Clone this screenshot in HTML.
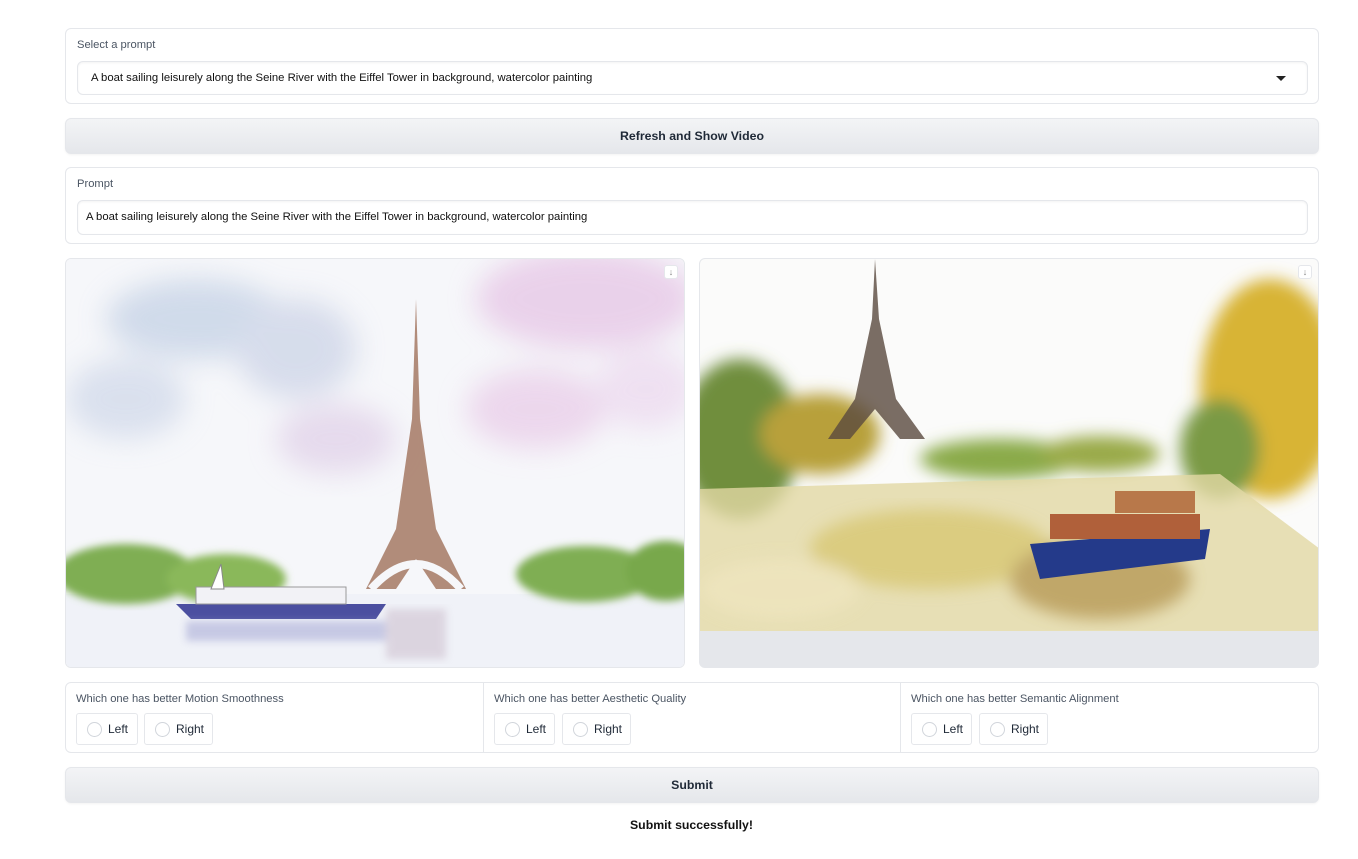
<!DOCTYPE html>
<html><head><meta charset="utf-8"><style>
*{box-sizing:border-box;margin:0;padding:0}
body{width:1358px;height:859px;background:#fff;font-family:"Liberation Sans",sans-serif;color:#1f2937;position:relative;overflow:hidden}
.box{position:absolute;border:1px solid #e5e7eb;border-radius:6px;background:#fff}
.lbl{position:absolute;font-size:11.2px;color:#4b5563}
.inp{position:absolute;border:1px solid #e5e7eb;border-radius:6px;background:#fff;font-size:11.3px;color:#111;box-shadow:inset 0 1px 2px rgba(0,0,0,.05)}
.btn{position:absolute;left:65px;width:1254px;height:36px;border:1px solid #e5e7eb;border-radius:6px;background:linear-gradient(#f3f4f6,#e5e7eb);font-size:12.3px;font-weight:bold;text-align:center;line-height:34px;color:#1f2937;box-shadow:0 1px 2px rgba(0,0,0,.05)}
.opt{position:absolute;top:713px;height:32px;border:1px solid #e5e7eb;border-radius:3px;background:#fff;font-size:12px;line-height:30px;padding-left:31px;color:#1f2937}
.opt:before{content:"";position:absolute;left:10px;top:8px;width:13px;height:13px;border:1px solid #d1d5db;border-radius:50%}
.dl{position:absolute;width:14px;height:14px;border:1px solid #e5e7eb;border-radius:3px;background:#fff;font-size:9px;text-align:center;line-height:12px;color:#888}
</style></head><body>
<div class="box" style="left:65px;top:28px;width:1254px;height:76px"></div>
<div class="lbl" style="left:77px;top:39px">Select a prompt</div>
<div class="inp" style="left:77px;top:61px;width:1231px;height:34px;padding:10px 13px">A boat sailing leisurely along the Seine River with the Eiffel Tower in background, watercolor painting</div>
<div style="position:absolute;left:1276px;top:76px;border-left:5px solid transparent;border-right:5px solid transparent;border-top:5px solid #222"></div>
<div class="btn" style="top:118px">Refresh and Show Video</div>
<div class="box" style="left:65px;top:167px;width:1254px;height:77px"></div>
<div class="lbl" style="left:77px;top:178px">Prompt</div>
<div class="inp" style="left:77px;top:200px;width:1231px;height:35px;padding:10px 8px">A boat sailing leisurely along the Seine River with the Eiffel Tower in background, watercolor painting</div>

<div class="box" style="left:65px;top:258px;width:620px;height:410px;overflow:hidden">
<svg width="620" height="410" viewBox="0 0 620 410">
<defs><filter id="b"><feGaussianBlur stdDeviation="14"/></filter><filter id="b2"><feGaussianBlur stdDeviation="4"/></filter></defs>
<rect width="620" height="410" fill="#f6f7fa"/>
<g filter="url(#b)" opacity=".6">
<ellipse cx="130" cy="60" rx="90" ry="40" fill="#b8c8e0"/><ellipse cx="60" cy="140" rx="60" ry="40" fill="#c8d2e6"/>
<ellipse cx="230" cy="90" rx="60" ry="50" fill="#c2cbe2"/><ellipse cx="520" cy="40" rx="110" ry="50" fill="#e2b8e0"/>
<ellipse cx="470" cy="150" rx="70" ry="40" fill="#e6c2e4"/><ellipse cx="270" cy="180" rx="60" ry="35" fill="#dbc8e4"/>
<ellipse cx="580" cy="130" rx="50" ry="40" fill="#ead2ec"/></g>
<rect y="335" width="620" height="75" fill="#f0f2f8"/>
<g filter="url(#b2)"><ellipse cx="60" cy="315" rx="70" ry="30" fill="#7fae52"/><ellipse cx="160" cy="320" rx="60" ry="25" fill="#8ab85a"/>
<ellipse cx="520" cy="315" rx="70" ry="28" fill="#7fae52"/><ellipse cx="600" cy="312" rx="40" ry="30" fill="#78a84c"/></g>
<path d="M350 40 L346 160 L330 270 L300 330 L330 330 L350 300 L370 330 L400 330 L370 270 L354 160 Z" fill="#a0705a" opacity=".8"/>
<path d="M305 330 Q350 280 395 330" fill="none" stroke="#f6f7fa" stroke-width="8"/>
<path d="M110 345 L320 345 L310 360 L125 360 Z" fill="#4b4fa0"/><rect x="130" y="328" width="150" height="17" fill="#f2f2f6" stroke="#999" stroke-width="1"/>
<path d="M145 330 L155 305 L158 330Z" fill="#fff" stroke="#888"/>
<g filter="url(#b2)" opacity=".5"><rect x="120" y="362" width="200" height="20" fill="#9da0d0"/><rect x="320" y="350" width="60" height="50" fill="#c8b8c8"/></g>
</svg><div class="dl" style="left:598px;top:6px">↓</div></div>

<div class="box" style="left:699px;top:258px;width:620px;height:410px;overflow:hidden;background:#e5e7eb">
<svg width="620" height="372" viewBox="0 0 620 372">
<defs><filter id="c"><feGaussianBlur stdDeviation="8"/></filter><filter id="c2"><feGaussianBlur stdDeviation="3"/></filter></defs>
<rect width="620" height="372" fill="#fbfbfa"/>
<g filter="url(#c)"><ellipse cx="40" cy="180" rx="60" ry="80" fill="#6f8e3e"/><ellipse cx="120" cy="175" rx="60" ry="40" fill="#b8a03a"/>
<ellipse cx="570" cy="130" rx="70" ry="110" fill="#d8b434"/><ellipse cx="520" cy="190" rx="40" ry="50" fill="#7a9a44"/>
<ellipse cx="300" cy="200" rx="80" ry="20" fill="#8aaa4a"/><ellipse cx="400" cy="195" rx="60" ry="18" fill="#9aaa4a"/></g>
<path d="M0 230 L520 215 L620 290 L620 372 L0 372Z" fill="#e2d8a4" opacity=".8"/>
<g filter="url(#c)" opacity=".7"><ellipse cx="230" cy="290" rx="120" ry="40" fill="#d6c46a"/><ellipse cx="400" cy="320" rx="90" ry="40" fill="#b09048"/><ellipse cx="80" cy="330" rx="80" ry="30" fill="#f0e6c0"/></g>
<path d="M175 0 L172 60 L155 140 L128 180 L150 180 L175 150 L200 180 L225 180 L196 140 L179 60 Z" fill="#5a4a3e" opacity=".8"/>
<path d="M330 285 L510 270 L505 300 L340 320 Z" fill="#243a8a"/><rect x="350" y="255" width="150" height="25" fill="#b0603a"/>
<rect x="415" y="232" width="80" height="22" fill="#b8784a"/>
</svg><div class="dl" style="left:598px;top:6px">↓</div></div>

<div class="box" style="left:65px;top:682px;width:1254px;height:71px"></div>
<div style="position:absolute;left:483px;top:683px;width:1px;height:69px;background:#e5e7eb"></div>
<div style="position:absolute;left:900px;top:683px;width:1px;height:69px;background:#e5e7eb"></div>
<div class="lbl" style="left:76px;top:693px">Which one has better Motion Smoothness</div>
<div class="lbl" style="left:494px;top:693px">Which one has better Aesthetic Quality</div>
<div class="lbl" style="left:911px;top:693px">Which one has better Semantic Alignment</div>
<div class="opt" style="left:76px;width:62px">Left</div><div class="opt" style="left:144px;width:69px">Right</div>
<div class="opt" style="left:494px;width:61px">Left</div><div class="opt" style="left:562px;width:69px">Right</div>
<div class="opt" style="left:911px;width:61px">Left</div><div class="opt" style="left:979px;width:69px">Right</div>
<div class="btn" style="top:767px">Submit</div>
<div style="position:absolute;left:0;width:1383px;top:818px;text-align:center;font-size:12.3px;font-weight:bold;color:#111">Submit successfully!</div>
</body></html>
